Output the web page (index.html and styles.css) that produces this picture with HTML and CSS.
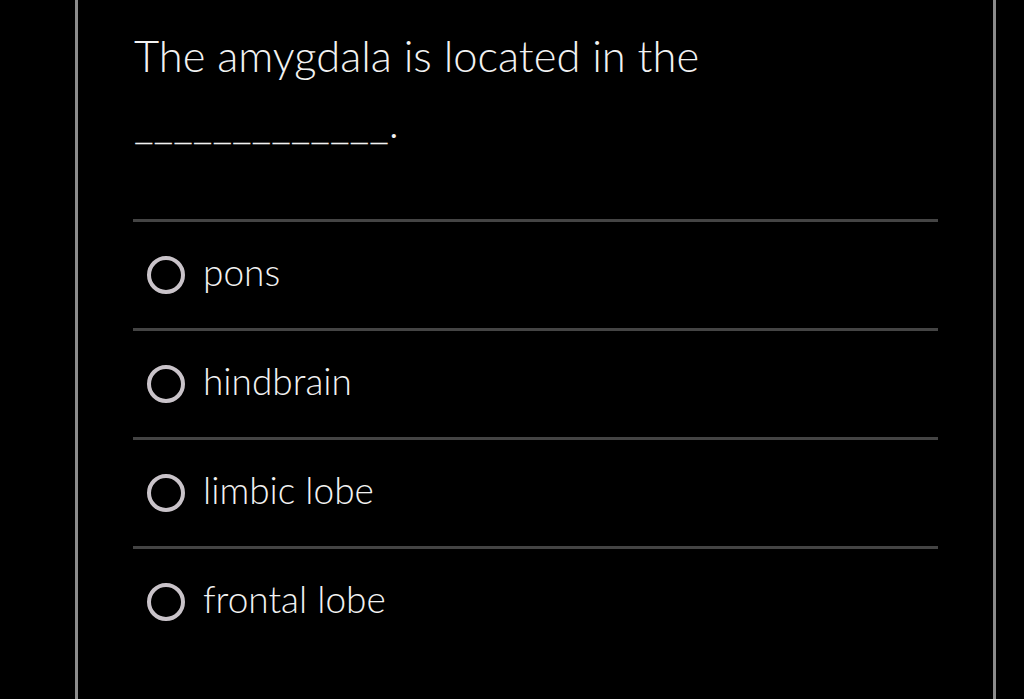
FILE: index.html
```html
<!DOCTYPE html>
<html lang="en">
<head>
<meta charset="utf-8">
<title>Quiz</title>
<link rel="stylesheet" href="styles.css">
</head>
<body>
<main class="card">
  <h1 class="question">The amygdala is located in the _____________.</h1>
  <ul class="options">
    <li class="option"><span class="radio"></span><span class="label">pons</span></li>
    <li class="option"><span class="radio"></span><span class="label">hindbrain</span></li>
    <li class="option"><span class="radio"></span><span class="label">limbic lobe</span></li>
    <li class="option"><span class="radio"></span><span class="label">frontal lobe</span></li>
  </ul>
</main>
</body>
</html>
```
FILE: styles.css
```css
html, body {
  margin: 0;
  padding: 0;
  background: #000;
  height: 100%;
}
body {
  font-family: Lato, "Open Sans", sans-serif;
  color: #f2f2f2;
  overflow: hidden;
}
.card {
  box-sizing: border-box;
  margin-left: 75px;
  width: 921px;
  height: 100%;
  border-left: 3px solid #8c8c8c;
  border-right: 3px solid #8c8c8c;
  padding: 22px 55px 0 56px;
}
.question {
  margin: 0;
  font-size: 43.5px;
  font-weight: 300;
  line-height: 66px;
  width: 620px;
}
.options {
  list-style: none;
  margin: 65px 0 0 -1px;
  padding: 0;
}
.option {
  display: flex;
  align-items: center;
  height: 106px;
  border-top: 3px solid #444;
  padding-left: 14px;
}
.radio {
  box-sizing: border-box;
  width: 38px;
  height: 38px;
  border: 4px solid #c9c3c9;
  border-radius: 50%;
  flex: none;
}
.label {
  margin-left: 18px;
  margin-top: -8px;
  font-size: 37px;
  font-weight: 300;
  color: #f2f2f2;
}
```
